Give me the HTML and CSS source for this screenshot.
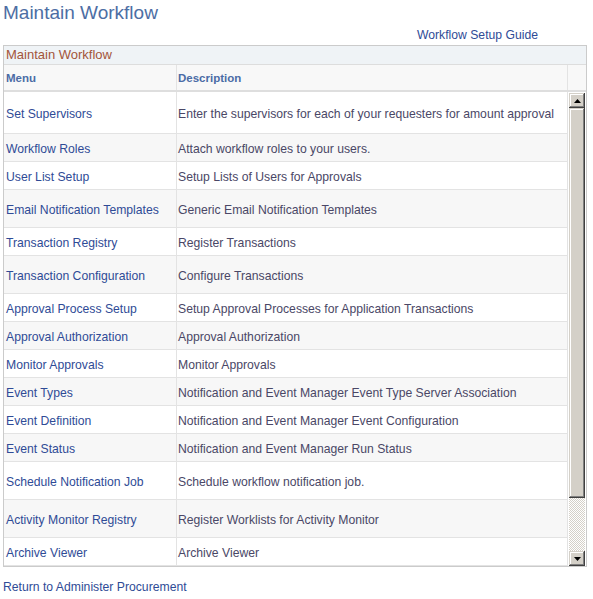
FILE: index.html
```html
<!DOCTYPE html>
<html lang="en">
<head>
    <meta charset="UTF-8">
    <title>Maintain Workflow</title>
    <link rel="stylesheet" href="styles.css">
</head>
<body>
    <div class="page">
        <h1 class="page-title">Maintain Workflow</h1>
        <div class="guide-row"><a href="#" class="link">Workflow Setup Guide</a></div>

        <div class="grid">
            <div class="grid-title">Maintain Workflow</div>
            <div class="grid-head">
                <div class="cell-menu">Menu</div>
                <div class="cell-desc">Description</div>
                <div class="cell-scroll"></div>
            </div>
            <div class="grid-body">
                <div class="rows">
                    <div class="row row-xl"><div class="cell-menu"><a href="#" class="link">Set Supervisors</a></div><div class="cell-desc">Enter the supervisors for each of your requesters for amount approval</div></div>
                    <div class="row"><div class="cell-menu"><a href="#" class="link">Workflow Roles</a></div><div class="cell-desc">Attach workflow roles to your users.</div></div>
                    <div class="row"><div class="cell-menu"><a href="#" class="link">User List Setup</a></div><div class="cell-desc">Setup Lists of Users for Approvals</div></div>
                    <div class="row row-lg"><div class="cell-menu"><a href="#" class="link">Email Notification Templates</a></div><div class="cell-desc">Generic Email Notification Templates</div></div>
                    <div class="row"><div class="cell-menu"><a href="#" class="link">Transaction Registry</a></div><div class="cell-desc">Register Transactions</div></div>
                    <div class="row row-lg"><div class="cell-menu"><a href="#" class="link">Transaction Configuration</a></div><div class="cell-desc">Configure Transactions</div></div>
                    <div class="row"><div class="cell-menu"><a href="#" class="link">Approval Process Setup</a></div><div class="cell-desc">Setup Approval Processes for Application Transactions</div></div>
                    <div class="row"><div class="cell-menu"><a href="#" class="link">Approval Authorization</a></div><div class="cell-desc">Approval Authorization</div></div>
                    <div class="row"><div class="cell-menu"><a href="#" class="link">Monitor Approvals</a></div><div class="cell-desc">Monitor Approvals</div></div>
                    <div class="row"><div class="cell-menu"><a href="#" class="link">Event Types</a></div><div class="cell-desc">Notification and Event Manager Event Type Server Association</div></div>
                    <div class="row"><div class="cell-menu"><a href="#" class="link">Event Definition</a></div><div class="cell-desc">Notification and Event Manager Event Configuration</div></div>
                    <div class="row"><div class="cell-menu"><a href="#" class="link">Event Status</a></div><div class="cell-desc">Notification and Event Manager Run Status</div></div>
                    <div class="row row-lg"><div class="cell-menu"><a href="#" class="link">Schedule Notification Job</a></div><div class="cell-desc">Schedule workflow notification job.</div></div>
                    <div class="row row-lg"><div class="cell-menu"><a href="#" class="link">Activity Monitor Registry</a></div><div class="cell-desc">Register Worklists for Activity Monitor</div></div>
                    <div class="row"><div class="cell-menu"><a href="#" class="link">Archive Viewer</a></div><div class="cell-desc">Archive Viewer</div></div>
                </div>

                <!-- classic scrollbar -->
                <div class="scrollbar">
                    <div class="sb-btn">
                        <svg width="7" height="4" viewBox="0 0 7 4"><polygon points="3.5,0 7,4 0,4" fill="#000"/></svg>
                    </div>
                    <div class="sb-thumb"></div>
                    <div class="sb-track"></div>
                    <div class="sb-btn">
                        <svg width="7" height="4" viewBox="0 0 7 4"><polygon points="0,0 7,0 3.5,4" fill="#000"/></svg>
                    </div>
                </div>
            </div>
        </div>

        <div class="footer-row"><a href="#" class="link">Return to Administer Procurement</a></div>
    </div>
</body>
</html>
```

FILE: styles.css
```css
* {
    box-sizing: border-box;
}
body {
    margin: 0;
    background: #fff;
    font-family: "Liberation Sans", Arial, sans-serif;
    font-size: 12.2px;
    color: #4a4766;
}
.page {
    padding-left: 3px;
    width: 587px;
}
.link {
    color: #2f4b96;
    text-decoration: none;
}
.page-title {
    margin: 0;
    padding-top: 2px;
    height: 26px;
    font-size: 19px;
    line-height: 22px;
    font-weight: normal;
    color: #4d6ea4;
}
.guide-row {
    height: 19px;
    padding-top: 2px;
    padding-right: 49px;
    line-height: 14px;
    text-align: right;
}

/* grid box */
.grid {
    width: 584px;
    border: 1px solid #cbcbcb;
}
.grid-title {
    height: 19px;
    padding-left: 2px;
    line-height: 18px;
    font-size: 13px;
    color: #a3553a;
    background: #eff3f6;
    border-bottom: 1px solid #dddddd;
}
.grid-head {
    display: flex;
    height: 27px;
    background: #f8f8f8;
    border-bottom: 2px solid #dedede;
    font-size: 11.5px;
    font-weight: bold;
    color: #4b6ca6;
}
.cell-menu {
    width: 173px;
    padding-left: 2px;
    border-right: 1px solid #e3e3e3;
    display: flex;
    align-items: center;
}
.cell-desc {
    width: 391px;
    padding-left: 1px;
    border-right: 1px solid #e3e3e3;
    display: flex;
    align-items: center;
}
.row .cell-menu,
.row .cell-desc {
    padding-top: 2px;
}
.cell-scroll {
    flex: 1;
}
.grid-body {
    display: flex;
}
.rows {
    width: 564px;
}
.row {
    display: flex;
    height: 28px;
    border-bottom: 1px solid #e3e3e3;
    background: #fff;
}
.row:nth-child(even) {
    background: #f7f7f7;
}
.row-lg {
    height: 38px;
}
.row-xl {
    height: 42px;
}

/* scrollbar */
.scrollbar {
    width: 16px;
    margin: 1px 0 0 1px;
    display: flex;
    flex-direction: column;
}
.sb-btn,
.sb-thumb {
    background: #d4d0c8;
    box-shadow: inset -1px -1px #404040, inset 1px 1px #d4d0c8,
                inset -2px -2px #808080, inset 2px 2px #ffffff;
}
.sb-btn {
    height: 15px;
    display: flex;
    align-items: center;
    justify-content: center;
}
.sb-thumb {
    height: 390px;
}
.sb-track {
    height: 53px;
    background-image: conic-gradient(#d4d0c8 25%, #fff 0 50%, #d4d0c8 0 75%, #fff 0);
    background-size: 2px 2px;
}
.footer-row {
    margin-top: 13px;
    line-height: 14px;
}
```
